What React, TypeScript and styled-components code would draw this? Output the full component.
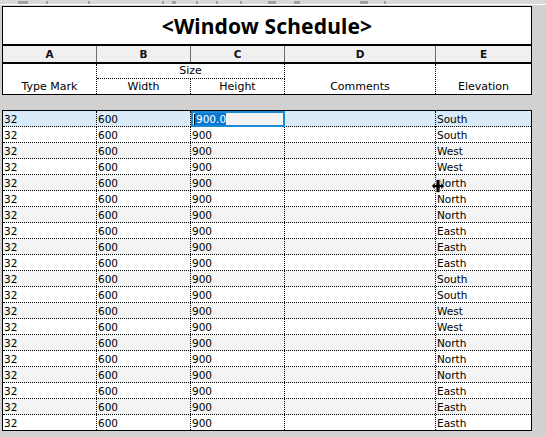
import React from "react";
import styled, { createGlobalStyle, css } from "styled-components";

const GlobalStyle = createGlobalStyle`
  html, body {
    margin: 0;
    padding: 0;
    background: #d1d1d1;
  }
  body {
    font-family: "DejaVu Sans", "Noto Sans", sans-serif;
    color: #111;
  }
`;

const COLS = "94px 94px 94px 151px 95px";

const Page = styled.div`
  position: relative;
  width: 546px;
  height: 437px;
  overflow: hidden;
`;

const Toolbar = styled.div`
  height: 4px;
  background: #d9d9d9;
  border-bottom: 1px solid #ffffff;
  display: flex;
  align-items: flex-end;
  padding-left: 4px;
`;

const ToolMark = styled.span<{ $left: number; $w?: number }>`
  display: block;
  margin-left: ${({ $left }) => $left}px;
  width: ${({ $w }) => $w ?? 2}px;
  height: 3px;
  background: #a0a0a0;
`;

const Sheet = styled.div`
  margin: 1px 0 0 2px;
  width: 530px;
`;

const Title = styled.div`
  height: 37px;
  border: 1px solid #000;
  border-bottom-width: 2px;
  background: #fff;
  display: flex;
  align-items: center;
  justify-content: center;
  font-family: "Noto Sans", "DejaVu Sans", sans-serif;
  font-weight: 700;
  font-size: 21px;
  letter-spacing: 0.15px;
  color: #000;
`;

const LettersRow = styled.div`
  display: grid;
  grid-template-columns: ${COLS};
  background: #f0f0f0;
  border-left: 1px solid #000;
  border-right: 1px solid #000;
  border-bottom: 2px solid #000;
  height: 16px;
`;

const Letter = styled.div`
  box-sizing: border-box;
  border-right: 1px solid #6e6e6e;
  font-weight: 700;
  font-size: 10.5px;
  line-height: 16px;
  text-align: center;
  &:last-child {
    border-right: none;
  }
`;

const HeaderBlock = styled.div`
  display: grid;
  grid-template-columns: ${COLS};
  grid-template-rows: 15px 15px;
  background: #fff;
  border-left: 1px solid #000;
  border-right: 1px solid #000;
  border-bottom: 1px solid #000;
`;

const HeadCell = styled.div<{ $col: string; $row: string; $under?: boolean; $last?: boolean }>`
  box-sizing: border-box;
  grid-column: ${({ $col }) => $col};
  grid-row: ${({ $row }) => $row};
  border-right: ${({ $last }) => ($last ? "none" : "1px dotted #000")};
  ${({ $under }) =>
    $under &&
    css`
      border-bottom: 1px dotted #000;
    `}
  display: flex;
  align-items: flex-end;
  justify-content: center;
  padding-bottom: 1px;
  font-size: 11px;
  line-height: 13px;
  color: #000;
`;

const DataBlock = styled.div`
  margin-top: 15px;
  border: 1px solid #000;
  background: #fff;
`;

const Row = styled.div<{ $alt: boolean; $selected: boolean }>`
  display: grid;
  grid-template-columns: ${COLS};
  height: 16px;
  box-sizing: border-box;
  border-bottom: 1px dotted #000;
  background: ${({ $alt, $selected }) =>
    $selected ? "#d9ebf8" : $alt ? "#f4f4f4" : "#ffffff"};
  &:last-child {
    border-bottom: none;
    height: 15px;
  }
`;

const Cell = styled.div<{ $last?: boolean }>`
  box-sizing: border-box;
  border-right: ${({ $last }) => ($last ? "none" : "1px dotted #000")};
  padding-left: 1px;
  font-size: 10.5px;
  line-height: 16px;
  color: #000;
  white-space: nowrap;
  overflow: hidden;
`;

const EditCell = styled.div`
  box-sizing: border-box;
  height: 16px;
  border: 2px solid #1a8ad6;
  background: #f3f3f3;
  display: flex;
  align-items: center;
  padding-left: 1px;
  font-size: 10.5px;
  line-height: 12px;
`;

const Caret = styled.span`
  display: block;
  width: 1px;
  height: 11px;
  background: #000;
`;

const Selected = styled.span`
  background: #0a78d4;
  color: #fff;
  padding-left: 1px;
  line-height: 12px;
`;

const Cursor = styled.svg`
  position: absolute;
  left: 431px;
  top: 179px;
`;

const elevations = [
  "South", "South", "West", "West", "North", "North", "North", "Easth", "Easth", "Easth",
  "South", "South", "West", "West", "North", "North", "North", "Easth", "Easth", "Easth",
];

export default function App() {
  return (
    <Page>
      <GlobalStyle />
      <Toolbar>
        <ToolMark $left={14} $w={10} />
        <ToolMark $left={18} />
        <ToolMark $left={40} />
        <ToolMark $left={72} />
        <ToolMark $left={8} $w={4} />
        <ToolMark $left={20} />
        <ToolMark $left={18} />
        <ToolMark $left={22} />
        <ToolMark $left={26} $w={8} />
        <ToolMark $left={18} $w={6} />
        <ToolMark $left={60} $w={8} />
        <ToolMark $left={16} />
      </Toolbar>
      <Sheet>
        <Title>&lt;Window Schedule&gt;</Title>
        <LettersRow>
          {["A", "B", "C", "D", "E"].map((l) => (
            <Letter key={l}>{l}</Letter>
          ))}
        </LettersRow>
        <HeaderBlock>
          <HeadCell $col="1" $row="1 / 3">Type Mark</HeadCell>
          <HeadCell $col="2 / 4" $row="1" $under>Size</HeadCell>
          <HeadCell $col="2" $row="2">Width</HeadCell>
          <HeadCell $col="3" $row="2">Height</HeadCell>
          <HeadCell $col="4" $row="1 / 3">Comments</HeadCell>
          <HeadCell $col="5" $row="1 / 3" $last>Elevation</HeadCell>
        </HeaderBlock>
        <DataBlock>
          {elevations.map((e, i) => (
            <Row key={i} $alt={i % 2 === 0} $selected={i === 0}>
              <Cell>32</Cell>
              <Cell>600</Cell>
              {i === 0 ? (
                <EditCell>
                  <Caret />
                  <Selected>900.0</Selected>
                </EditCell>
              ) : (
                <Cell>900</Cell>
              )}
              <Cell></Cell>
              <Cell $last>{e}</Cell>
            </Row>
          ))}
        </DataBlock>
      </Sheet>
      <Cursor width="14" height="14" viewBox="0 0 14 14">
        <path
          d="M5 0.5h4v5h1V3l3.5 4-3.5 4V8.5H9v5H5v-5H4V11L0.5 7 4 3v2.5h1z"
          fill="#000"
          stroke="#fff"
          strokeWidth="0.8"
        />
      </Cursor>
    </Page>
  );
}
